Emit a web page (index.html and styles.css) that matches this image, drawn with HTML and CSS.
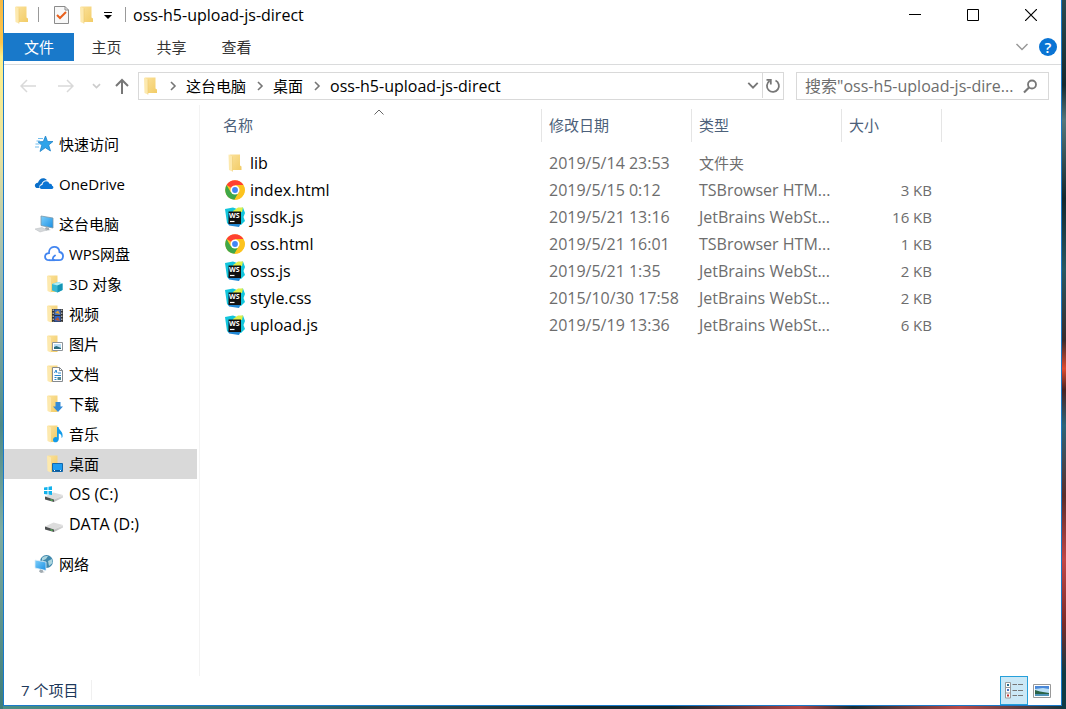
FILE: index.html
```html
<!DOCTYPE html>
<html lang="zh-CN">
<head>
    <meta charset="UTF-8">
    <meta name="viewport" content="width=device-width, initial-scale=1.0">
    <title>oss-h5-upload-js-direct</title>
    <link rel="stylesheet" href="styles.css">
</head>
<body>
    <!-- Icon sprite -->
    <svg class="sprite" aria-hidden="true">
        <defs>
            <linearGradient id="gold" x1="0" y1="0" x2="1" y2="1">
                <stop offset="0" stop-color="#fbe19b"/>
                <stop offset="1" stop-color="#f2cc66"/>
            </linearGradient>
            <linearGradient id="sky" x1="0" y1="0" x2="1" y2="1">
                <stop offset="0" stop-color="#7fd0fb"/>
                <stop offset="1" stop-color="#1a8fe3"/>
            </linearGradient>
            <linearGradient id="metal" x1="0" y1="0" x2="0" y2="1">
                <stop offset="0" stop-color="#e2e2e2"/>
                <stop offset="1" stop-color="#b4b4b4"/>
            </linearGradient>
        </defs>
        <symbol id="folder" viewBox="0 0 13 18">
            <path d="M1 0.5H11.5V11.5L13 12.5V16H3z" fill="url(#gold)"/>
            <path d="M0 0.5L4 2.5V17.5L0.5 16z" fill="#fde9ae"/>
            <path d="M4 2.5V17.5" stroke="#eccb70" stroke-width="0.6"/>
        </symbol>
        <symbol id="base" viewBox="0 0 20 20">
            <path d="M4 1.5H13.5V18H6z" fill="url(#gold)"/>
            <path d="M3 1.5L7 3.5V18.5L3.5 17z" fill="#fde9ae"/>
        </symbol>
        <symbol id="check" viewBox="0 0 15 18">
            <path d="M0.5 0.5H11L14.5 4V17.5H0.5z" fill="#f8f8f8" stroke="#8b8b8b"/>
            <path d="M11 0.5V4H14.5" fill="none" stroke="#8b8b8b"/>
            <path d="M3 9L6 12L12 6" fill="none" stroke="#e8601c" stroke-width="2"/>
        </symbol>
        <symbol id="star" viewBox="0 0 20 20">
            <path d="M11.5 2L13.5 7.5L19 7.5L14.7 11L16.5 17L11.3 13.7L6 17.5L7.8 11.3L4 7.8L9.3 7.6z" fill="#2fa4ea" stroke="#2083c9" stroke-width="0.8"/>
            <path d="M4 4.5H9M2.5 7H6M1.500 10H5.500M1 13H5" stroke="#61b6eb" stroke-width="0.9"/>
        </symbol>
        <symbol id="onedrive" viewBox="0 0 20 20">
            <path d="M2.500 14C-0.500 12.500 1 8.500 4 8.700C5 4.500 10 2.500 13 6.200C10 6 7.800 8 7.500 10C5.500 10.500 5 12.500 5.700 14z" fill="#0a6fc9"/>
            <path d="M7.500 15C5 14.500 5.500 11 8.400 11C8.500 7 14 5.500 15.500 9.700C18 9.300 18.300 11.500 18 11.800C20 12.300 19.700 15 18 15z" fill="#0a74d4"/>
        </symbol>
        <symbol id="pc" viewBox="0 0 20 20">
            <path d="M7 2L19 4V14L7 11.500z" fill="url(#sky)" stroke="#7c98a8" stroke-width="0.8"/>
            <path d="M12 13L15 13.700V15.500L17 16L12 16.500L10.500 15.500z" fill="#a5adb2"/>
            <path d="M1 15L8 13.500L13 16L6 18z" fill="#d5d8da" stroke="#b9bdc0" stroke-width="0.500"/>
        </symbol>
        <symbol id="wps" viewBox="0 0 20 20">
            <path d="M5 16.200C-0.500 16 0 9.500 5 9.200C4.500 1 15.500 0.800 15.500 8C20.500 9 20 16.200 15 16.200H10.500C8 16.200 8.500 12.800 11 11.500" fill="none" stroke="#4285f0" stroke-width="1.800" stroke-linecap="round"/>
            <path d="M5 16.200H11" stroke="#4285f0" stroke-width="1.800"/>
        </symbol>
        <symbol id="objects" viewBox="0 0 20 20">
            <use href="#base"/>
            <path d="M8 10L14 8L18.500 9.500V16L13.500 18.500L8 16.500z" fill="#36b7d2"/>
            <path d="M8 10L14 8L18.500 9.500L13.500 11.500z" fill="#b2edf4"/>
            <path d="M13.500 11.500L18.500 9.500V16L13.500 18.500z" fill="#1594b5"/>
        </symbol>
        <symbol id="videos" viewBox="0 0 20 20">
            <use href="#base"/>
            <path d="M8 5H19V18H8z" fill="#333"/>
            <path d="M10.500 5.500H16.500V11H10.500z" fill="#3c6fc6"/>
            <path d="M10.500 12H16.500V17.500H10.500z" fill="#2d62c7"/>
            <path d="M11 9L14 6.500L16 10z" fill="#e4a231"/>
            <path d="M11 16L14 13L16 17z" fill="#b7562e"/>
            <path d="M9.200 5.500V18M17.800 5.500V18" stroke="#ddd" stroke-dasharray="1.500 1.500"/>
        </symbol>
        <symbol id="pictures" viewBox="0 0 20 20">
            <use href="#base"/>
            <path d="M8.500 8.500H18.500V16.500H8.500z" fill="#fff" stroke="#8e9499"/>
            <path d="M10 10H17V15H10z" fill="#b7ddf5"/>
            <path d="M10 13L12.500 12L17 14V15H10z" fill="#286c7c"/>
        </symbol>
        <symbol id="documents" viewBox="0 0 20 20">
            <use href="#base"/>
            <path d="M8.500 3.500H15.500L18.500 6.500V17.500H8.500z" fill="#fff" stroke="#858a8f"/>
            <path d="M15.500 3.500V6.500H18.500" fill="none" stroke="#858a8f"/>
            <path d="M10.500 9L12 6L13 9M14 9H17M10.500 11.500H17M10.500 13.500H12.500M10.500 15.500H12.500" fill="none" stroke="#2888cf"/>
            <path d="M13.500 13H17V16H13.500z" fill="#518997"/>
        </symbol>
        <symbol id="downloads" viewBox="0 0 20 20">
            <use href="#base"/>
            <path d="M11.500 8H16.500V12.500H19L14 18L9 12.500H11.500z" fill="#338bd8"/>
        </symbol>
        <symbol id="music" viewBox="0 0 20 20">
            <use href="#base"/>
            <path d="M13 3H14.500C15 6.500 19.500 7.500 18.500 13L17.500 14C18 11 16.500 10 14.800 9.500V15C14.500 19 9 19.500 9 16C9 13.500 11.500 12.500 13 13.500z" fill="#129be9"/>
        </symbol>
        <symbol id="desktop" viewBox="0 0 20 20">
            <use href="#base"/>
            <path d="M8.500 9.500H18.500V17.500H8.500z" fill="#1e9df1" stroke="#1268ad"/>
            <path d="M9 16.500H18" stroke="#0c5795"/>
            <path d="M10 16.500H11M16 16.500H17" stroke="#fff"/>
        </symbol>
        <symbol id="drive" viewBox="0 0 20 20">
            <path d="M1 12.500L9.500 8.500L19 11L10 15.500z" fill="#dcdcdc"/>
            <path d="M1 12.500L10 15.500V18L1 15.500z" fill="#4c4f50"/>
            <path d="M10 15.500L19 11V13.500L10 18z" fill="url(#metal)"/>
            <path d="M6.500 15.800L8.500 16.400" stroke="#57cf5a" stroke-width="1.200"/>
        </symbol>
        <symbol id="osdrive" viewBox="0 0 20 20">
            <use href="#drive"/>
            <path d="M0 3.500L3.500 3V6H0zM4.500 2.800L8 2.300V6H4.500zM0 7H3.500V10.500L0 10zM4.500 7H8V11L4.500 10.600z" fill="#12b2ec"/>
        </symbol>
        <symbol id="network" viewBox="0 0 20 20">
            <circle cx="12.500" cy="7.500" r="6.500" fill="#3f88ad"/>
            <path d="M8 4C10 2 12 2 14 2L12 5L8 7zM14 7L18 5L18.500 9L15 12z" fill="#acd5de"/>
            <path d="M1 6L12 8V16.500L1 14z" fill="url(#sky)" stroke="#e1eff7" stroke-width="0.800"/>
            <path d="M6 15.500L9 16.200V17.500L11 18L7 19L5 17.500z" fill="#a2abb1"/>
        </symbol>
        <symbol id="chrome" viewBox="0 0 20 20">
            <circle cx="10" cy="10" r="9.800" fill="#fcc31e"/>
            <path d="M10 10L1.500 5.100A9.800 9.800 0 0 1 18.500 5.100H10z" fill="#ff4131"/>
            <path d="M1.500 5.100A9.800 9.800 0 0 0 9.500 19.800L14 12L10 10L5.800 12.300z" fill="#3fa748"/>
            <path d="M10 5.500H18.700A9.800 9.800 0 0 1 9.500 19.800L14 12z" fill="#fcc31e"/>
            <circle cx="10" cy="10" r="4.500" fill="#fff"/>
            <circle cx="10" cy="10" r="2.900" fill="#4285f4"/>
        </symbol>
        <symbol id="webstorm" viewBox="0 0 20 20">
            <path d="M0 2L8 0.500L12 2L18 0.500L20 6L18.500 10L20 14L16 18H4L2 16z" fill="#12c5dc"/>
            <path d="M8 4L13 0.500L18 0.500L17 5H8z" fill="#e0f04a"/>
            <path d="M3 15L16 16L14 20L4 18.500z" fill="#2187d4"/>
            <path d="M3.500 4.500H16V17H3.500z" fill="#111"/>
            <path d="M5 14.500H9.500" stroke="#fff" stroke-width="1.200"/>
            <text x="4" y="11" class="ws">WS</text>
        </symbol>
        <symbol id="right" viewBox="0 0 8 12">
            <path d="M2 2L6 6L2 10" fill="none" stroke="#767676" stroke-width="1.600"/>
        </symbol>
        <symbol id="down" viewBox="0 0 14 10">
            <path d="M1.500 2L7 7.500L12.500 2" fill="none" stroke="currentColor" stroke-width="1.500"/>
        </symbol>
    </svg>

    <div class="window">
        <header class="titlebar">
            <svg class="folder"><use href="#folder"/></svg>
            <span class="divider"></span>
            <button class="quick" aria-label="属性"><svg class="check"><use href="#check"/></svg></button>
            <button class="quick" aria-label="新建文件夹"><svg class="folder"><use href="#folder"/></svg></button>
            <button class="quick" aria-label="自定义快速访问工具栏">
                <svg width="8" height="8"><path d="M0 1.500H8" stroke="#000"/><path d="M0 4H8L4 8z"/></svg>
            </button>
            <span class="divider"></span>
            <span class="title latin">oss-h5-upload-js-direct</span>
            <div class="controls">
                <button aria-label="最小化"><svg width="12" height="12"><path d="M0 5.500H12" stroke="#000"/></svg></button>
                <button aria-label="最大化"><svg width="12" height="12"><path d="M0.500 0.500H11.500V11.500H0.500z" fill="none" stroke="#000"/></svg></button>
                <button aria-label="关闭"><svg width="12" height="12"><path d="M0 0L12 12M12 0L0 12" stroke="#000" stroke-width="1.200"/></svg></button>
            </div>
        </header>

        <nav class="ribbon">
            <button class="tab active">文件</button>
            <button class="tab">主页</button>
            <button class="tab">共享</button>
            <button class="tab">查看</button>
            <button class="expand" aria-label="展开功能区"><svg width="14" height="10"><use href="#down"/></svg></button>
            <button class="help" aria-label="帮助">?</button>
        </nav>

        <div class="toolbar">
            <div class="history">
                <button aria-label="后退"><svg width="16" height="14"><path d="M1 7H16M7 1L1 7L7 13" fill="none" stroke="#d9d9d9" stroke-width="1.500"/></svg></button>
                <button aria-label="前进"><svg width="16" height="14"><path d="M0 7H15M9 1L15 7L9 13" fill="none" stroke="#d9d9d9" stroke-width="1.500"/></svg></button>
                <button class="recent" aria-label="最近位置"><svg width="9" height="8" viewBox="0 0 14 10"><path d="M1.500 2L7 7.500L12.500 2" fill="none" stroke="#ccc" stroke-width="2.500"/></svg></button>
                <button class="up" aria-label="上移"><svg width="14" height="16"><path d="M7 16V2M1 8L7 2L13 8" fill="none" stroke="#777" stroke-width="2"/></svg></button>
            </div>
            <div class="address">
                <svg class="folder"><use href="#folder"/></svg>
                <svg class="arrow"><use href="#right"/></svg>
                <a href="#">这台电脑</a>
                <svg class="arrow"><use href="#right"/></svg>
                <a href="#">桌面</a>
                <svg class="arrow"><use href="#right"/></svg>
                <a class="latin" href="#">oss-h5-upload-js-direct</a>
                <button class="drop" aria-label="历史记录"><svg width="12" height="9" viewBox="0 0 14 10"><path d="M1.500 2L7 7.500L12.500 2" fill="none" stroke="#777" stroke-width="2.200"/></svg></button>
                <button class="refresh" aria-label="刷新"><svg width="16" height="16"><path d="M10.500 2.500A6 6 0 1 1 4.500 3M1.500 1.800H5.800V6.500" fill="none" stroke="#777" stroke-width="1.800"/></svg></button>
            </div>
            <label class="search">
                <input class="latin" type="text" aria-label="搜索" placeholder="搜索&quot;oss-h5-upload-js-dire...">
                <svg width="15" height="15"><circle cx="9" cy="5.500" r="4" fill="none" stroke="#777" stroke-width="1.800"/><path d="M6 8.500L1 13.500" stroke="#777" stroke-width="2.200"/></svg>
            </label>
        </div>

        <main class="content">
            <nav class="sidebar">
                <a class="item" href="#"><svg><use href="#star"/></svg>快速访问</a>
                <a class="item group" href="#"><svg><use href="#onedrive"/></svg>OneDrive</a>
                <a class="item group" href="#"><svg><use href="#pc"/></svg>这台电脑</a>
                <a class="item child" href="#"><svg><use href="#wps"/></svg>WPS网盘</a>
                <a class="item child" href="#"><svg><use href="#objects"/></svg>3D 对象</a>
                <a class="item child" href="#"><svg><use href="#videos"/></svg>视频</a>
                <a class="item child" href="#"><svg><use href="#pictures"/></svg>图片</a>
                <a class="item child" href="#"><svg><use href="#documents"/></svg>文档</a>
                <a class="item child" href="#"><svg><use href="#downloads"/></svg>下载</a>
                <a class="item child" href="#"><svg><use href="#music"/></svg>音乐</a>
                <a class="item child selected" href="#"><svg><use href="#desktop"/></svg>桌面</a>
                <a class="item child latin" href="#"><svg><use href="#osdrive"/></svg>OS (C:)</a>
                <a class="item child latin" href="#"><svg><use href="#drive"/></svg>DATA (D:)</a>
                <a class="item group" href="#"><svg><use href="#network"/></svg>网络</a>
            </nav>

            <div class="files">
                <table>
                    <colgroup>
                        <col class="col-name">
                        <col class="col-date">
                        <col class="col-type">
                        <col class="col-size">
                    </colgroup>
                    <thead>
                        <tr>
                            <th>名称<svg class="sort" width="10" height="6"><path d="M0.500 5.500L5 1L9.500 5.500" fill="none" stroke="#666"/></svg></th>
                            <th>修改日期</th>
                            <th>类型</th>
                            <th>大小</th>
                        </tr>
                    </thead>
                    <tbody>
                        <tr><td><svg class="small"><use href="#folder"/></svg>lib</td><td>2019/5/14 23:53</td><td class="cjk">文件夹</td><td></td></tr>
                        <tr><td><svg><use href="#chrome"/></svg>index.html</td><td>2019/5/15 0:12</td><td>TSBrowser HTM...</td><td>3 KB</td></tr>
                        <tr><td><svg><use href="#webstorm"/></svg>jssdk.js</td><td>2019/5/21 13:16</td><td>JetBrains WebSt...</td><td>16 KB</td></tr>
                        <tr><td><svg><use href="#chrome"/></svg>oss.html</td><td>2019/5/21 16:01</td><td>TSBrowser HTM...</td><td>1 KB</td></tr>
                        <tr><td><svg><use href="#webstorm"/></svg>oss.js</td><td>2019/5/21 1:35</td><td>JetBrains WebSt...</td><td>2 KB</td></tr>
                        <tr><td><svg><use href="#webstorm"/></svg>style.css</td><td>2015/10/30 17:58</td><td>JetBrains WebSt...</td><td>2 KB</td></tr>
                        <tr><td><svg><use href="#webstorm"/></svg>upload.js</td><td>2019/5/19 13:36</td><td>JetBrains WebSt...</td><td>6 KB</td></tr>
                    </tbody>
                </table>
            </div>
        </main>

        <footer class="statusbar">
            <span class="count">7 个项目</span>
            <div class="views">
                <button class="view active" aria-label="详细信息">
                    <svg width="18" height="17">
                        <path d="M0.500 0.500H5.500V16H0.500zM0.500 5.500H5.500M0.500 11H5.500" fill="#fff" stroke="#999"/>
                        <path d="M7.500 2.500H12M13 2.500H18M7.500 8.500H12M13 8.500H18M7.500 13.500H12M13 13.500H18" stroke="#777"/>
                        <path d="M2 3H4" stroke="#286c8c" stroke-width="2"/>
                        <path d="M2 8H4" stroke="#4b6fc0" stroke-width="2"/>
                        <path d="M2 13.500H4" stroke="#c22f2f" stroke-width="2"/>
                    </svg>
                </button>
                <button class="view" aria-label="大缩略图">
                    <svg width="18" height="14">
                        <path d="M0.500 0.500H17.500V13.500H0.500z" fill="#fff" stroke="#999"/>
                        <path d="M2 2H16V12H2z" fill="#b9def5"/>
                        <path d="M2 2H16V5L10 4L2 5z" fill="#4a88d8"/>
                        <path d="M2 6L7 7.500L16 9V10H2z" fill="#2b6447"/>
                        <path d="M2 10H16V12H2z" fill="#4f94b8"/>
                    </svg>
                </button>
            </div>
        </footer>
    </div>
</body>
</html>
```
FILE: styles.css
```css
* {
    box-sizing: border-box;
}
body {
    display: flex;
    min-height: 100vh;
    margin: 0;
    padding: 0 4px 3px 3px;
    font-family: "Open Sans", "Noto Sans CJK SC", sans-serif;
    font-size: 15px;
    line-height: 20px;
    color: #000;
    /* desktop wallpaper showing round the window */
    background:
        linear-gradient(#f5b944, #ffc54a 6%, #fff08a 8%, #e8e2a0 22%, #9dbcb0 38%, #4e8a88 60%, #7fada2 75%, #3d7c78) left / 3px 100% no-repeat,
        linear-gradient(#2b4a50, #15292d 12%, #56777b 17%, #14272b 28%, #285862 38%, #3a2a2a 48%, #e04a2e 52%, #4a2220 55%, #2d6478 60%, #5c2c29 70%, #c24646 79%, #7a2a28 88%, #0f3a44 95%) right / 4px 100% no-repeat,
        linear-gradient(to right, #4a8f86, #2c6670 30%, #12292e 55%, #12292e 63%, #3c2c30 66%, #b04444 75%, #1c2c30 80%, #b84a48 90%, #12343c);
}
button {
    display: flex;
    align-items: center;
    justify-content: center;
    padding: 0;
    border: none;
    background: none;
    font: inherit;
    color: inherit;
}
a {
    color: inherit;
    text-decoration: none;
}
svg {
    flex-shrink: 0;
}
.sprite {
    position: absolute;
    width: 0;
    height: 0;
    visibility: hidden;
}
.ws {
    font: bold 7px "Open Sans", sans-serif;
    fill: #fff;
}
.latin {
    font-size: 16px;
}
.folder {
    width: 13px;
    height: 18px;
}
.check {
    width: 15px;
    height: 18px;
}
.window {
    flex: 1;
    display: flex;
    flex-direction: column;
    min-width: 0;
    background: #fff;
    border: 1px solid #1979ca;
    border-top: none;
}

/* Title bar */
.titlebar {
    display: flex;
    align-items: center;
    height: 33px;
    padding: 0 1px 4px 11px;
}
.divider {
    width: 1px;
    height: 15px;
    margin: 0 7px 0 13px;
    background: #999;
}
.folder + .divider {
    margin: 0 15px 0 10px;
}
.quick + .quick {
    margin-left: 11px;
}
.title {
    flex: 1;
}
.controls {
    display: flex;
    align-self: stretch;
}
.controls button {
    width: 58px;
}

/* Ribbon tabs */
.ribbon {
    display: flex;
    height: 32px;
    padding-bottom: 3px;
    border-bottom: 1px solid #dadbdc;
}
.tab {
    width: 65px;
    color: #333;
}
.tab.active {
    width: 70px;
    background: #1979ca;
    color: #fff;
}
.expand {
    margin-left: auto;
    color: #999;
}
.help {
    align-self: center;
    width: 18px;
    height: 18px;
    margin: 0 4px 0 10px;
    border-radius: 50%;
    background: #0a74d4;
    color: #fff;
    font-weight: 600;
}

/* Navigation and address bar */
.toolbar {
    display: flex;
    padding: 7px 12px 5px 16px;
}
.history {
    display: flex;
    align-items: center;
    width: 118px;
}
.history button + button {
    margin-left: 22px;
}
.history button.recent {
    margin-left: 18px;
}
.history button.up {
    margin-left: 14px;
}
.address {
    flex: 1;
    display: flex;
    align-items: center;
    height: 28px;
    padding: 0 0 1px 5px;
    border: 1px solid #d9d9d9;
}
.arrow {
    width: 8px;
    height: 12px;
    margin: 0 9px 0 10px;
}
.folder + .arrow {
    margin-left: 12px;
}
.drop {
    margin-left: auto;
    margin-right: 3px;
}
.refresh {
    align-self: stretch;
    width: 21px;
    border-left: 1px solid #d9d9d9;
}
.search {
    display: flex;
    align-items: center;
    width: 253px;
    height: 28px;
    margin-left: 12px;
    padding: 0 10px 0 8px;
    border: 1px solid #d9d9d9;
}
.search input {
    flex: 1;
    min-width: 0;
    padding: 0;
    border: none;
    outline: none;
    background: none;
    font-family: inherit;
}
.search input::placeholder {
    color: #6d6d6d;
}

/* Main area */
.content {
    flex: 1;
    display: flex;
}
.sidebar {
    width: 196px;
    padding: 24px 2px 0 0;
    border-right: 1px solid #f3f3f3;
}
.item {
    display: flex;
    align-items: center;
    gap: 5px;
    height: 30px;
    padding-left: 30px;
}
.item svg {
    width: 20px;
    height: 20px;
}
.item.group {
    margin-top: 10px;
}
.item.child {
    padding-left: 40px;
}
.item.selected {
    background: #d9d9d9;
}

.files {
    flex: 1;
    padding: 4px 0 0 16px;
}
table {
    width: 726px;
    table-layout: fixed;
    border-collapse: separate;
    border-spacing: 0;
}
.col-name {
    width: 326px;
}
.col-date,
.col-type {
    width: 150px;
}
.col-size {
    width: 100px;
}
th {
    position: relative;
    height: 33px;
    padding: 0 7px 2px;
    border-right: 1px solid #e5e5e5;
    font-weight: normal;
    text-align: left;
    color: #4c607a;
}
.sort {
    position: absolute;
    top: 0;
    left: 50%;
    margin-left: -5px;
}
tbody::before {
    content: "";
    display: block;
    height: 7px;
}
td {
    height: 27px;
    padding: 0 7px;
    font-size: 16px;
    color: #6d6d6d;
    white-space: nowrap;
}
td.cjk {
    font-size: 15px;
}
td:first-child {
    display: flex;
    align-items: center;
    gap: 5px;
    padding-left: 9px;
    color: #000;
}
td:last-child {
    padding-right: 10px;
    font-size: 15px;
    text-align: right;
}
td svg {
    width: 20px;
    height: 20px;
}
td svg.small {
    height: 18px;
}

/* Status bar */
.statusbar {
    display: flex;
    align-items: center;
    justify-content: space-between;
    height: 29px;
    padding: 0 5px 0 17px;
    color: #1e395b;
}
.count {
    margin-bottom: 2px;
    padding-right: 13px;
    border-right: 1px solid #f0f0f0;
}
.views {
    display: flex;
    height: 29px;
}
.view {
    width: 28px;
}
.view.active {
    border: 1px solid #26a0da;
    background: #cbe8f6;
}
```
